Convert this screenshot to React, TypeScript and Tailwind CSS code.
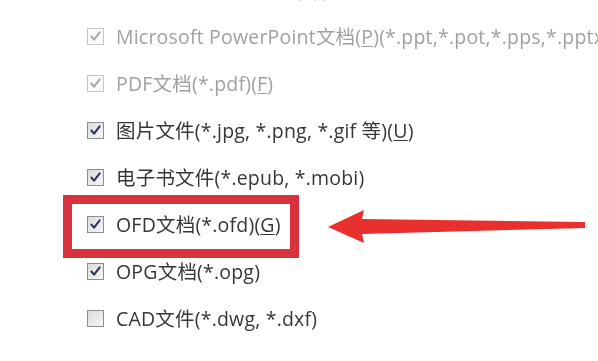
import type { ReactNode } from 'react';

type Row = { label: ReactNode; checked: boolean; disabled?: boolean };

const Key = ({ k }: { k: string }) => (
  <>
    (<span className="underline underline-offset-2">{k}</span>)
  </>
);

const rows: Row[] = [
  { label: <>Microsoft Excel文档<Key k="X" />(*.xls,*.xlt,*.xlsx,*.xlsm</>, checked: true, disabled: true },
  { label: <>Microsoft PowerPoint文档<Key k="P" />(*.ppt,*.pot,*.pps,*.pptx,*.potx)</>, checked: true, disabled: true },
  { label: <>PDF文档(*.pdf)<Key k="F" /></>, checked: true, disabled: true },
  { label: <>图片文件(*.jpg, *.png, *.gif 等)<Key k="U" /></>, checked: true },
  { label: <>电子书文件(*.epub, *.mobi)</>, checked: true },
  { label: <>OFD文档(*.ofd)<Key k="G" /></>, checked: true },
  { label: <>OPG文档(*.opg)</>, checked: true },
  { label: <>CAD文件(*.dwg, *.dxf)</>, checked: false },
];

function Checkbox({ checked, disabled }: { checked: boolean; disabled?: boolean }) {
  return (
    <div
      className={`w-[17px] h-[17px] shrink-0 border flex items-center justify-center ${
        disabled ? 'border-[#c4c4c4] bg-[#fafafa]' : 'border-[#8a8c90] bg-gradient-to-br from-[#dcdcdc] to-[#f6f6f6]'
      }`}
    >
      {checked && (
        <svg width="13" height="13" viewBox="0 0 11 11">
          <path
            d="M2 5.5 L4.3 8.2 L9 2"
            fill="none"
            stroke={disabled ? '#a8a8a8' : '#27345e'}
            strokeWidth="1.7"
            strokeLinecap="round"
            strokeLinejoin="round"
          />
        </svg>
      )}
    </div>
  );
}

export default function App() {
  return (
    <div
      className="relative w-[598px] h-[361px] overflow-hidden bg-white"
      style={{ fontFamily: '"Open Sans", "Noto Sans CJK SC", sans-serif' }}
    >
      <div className="mt-[-34px] pl-[87px] blur-[0.4px]">
        {rows.map((r, i) => (
          <div key={i} className="h-[47px] flex items-center gap-[12px] whitespace-nowrap">
            <Checkbox checked={r.checked} disabled={r.disabled} />
            <span
              className={`text-[19.5px] tracking-[0.2px] ${r.disabled ? 'text-[#a0a0a0]' : 'text-[#363636]'}`}
            >
              {r.label}
            </span>
          </div>
        ))}
      </div>

      {/* annotation */}
      <div className="absolute left-[63px] top-[195px] w-[236px] h-[63px] border-[9px] border-[#d8323c]" />
      <svg className="absolute left-0 top-0" width="598" height="361" viewBox="0 0 598 361">
        <path d="M328 227 L364 210 L362 219 L585 222 L585 228 L362 234 L364 243 Z" fill="#e8302f" />
      </svg>
    </div>
  );
}
